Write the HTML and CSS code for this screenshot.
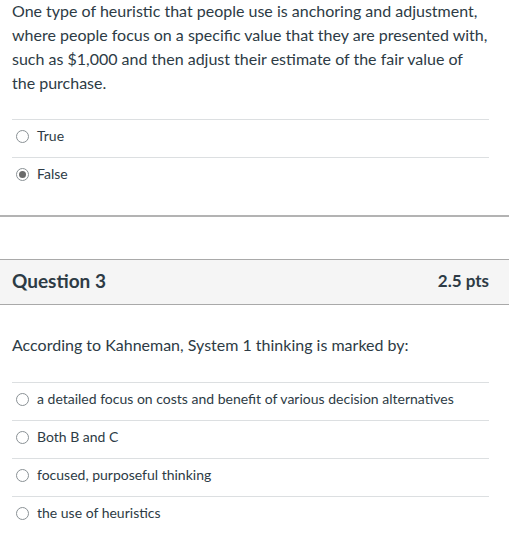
FILE: index.html
```html
<!DOCTYPE html>
<html>
<head>
<meta charset="utf-8">
<link rel="stylesheet" href="styles.css">
</head>
<body>
<div class="q-body">
  <div class="q-text">One type of heuristic that people use is anchoring and adjustment, where people focus on a specific value that they are presented with, such as $1,000 and then adjust their estimate of the fair value of the purchase.</div>
  <div class="answers first">
    <div class="answer"><span class="radio"></span><span>True</span></div>
    <div class="answer"><span class="radio checked"></span><span>False</span></div>
  </div>
</div>
<div class="divider"></div>
<div class="q-header">
  <span class="q-title">Question 3</span>
  <span class="q-pts">2.5 pts</span>
</div>
<div class="q-body">
  <div class="q-text second">According to Kahneman, System 1 thinking is marked by:</div>
  <div class="answers">
    <div class="answer"><span class="radio"></span><span>a detailed focus on costs and benefit of various decision alternatives</span></div>
    <div class="answer"><span class="radio"></span><span>Both B and C</span></div>
    <div class="answer"><span class="radio"></span><span>focused, purposeful thinking</span></div>
    <div class="answer"><span class="radio"></span><span>the use of heuristics</span></div>
  </div>
</div>
</body>
</html>
```
FILE: styles.css
```css
html, body {
  margin: 0;
  padding: 0;
  background: #fff;
}
body {
  font-family: Lato, "Noto Sans", sans-serif;
  color: #2d3b45;
  width: 509px;
  overflow: hidden;
}
.q-body {
  padding: 0 20px 0 12px;
}
.q-text {
  font-size: 16px;
  line-height: 24px;
  margin-top: -1px;
}
.q-text.second {
  margin-top: 0;
  padding-top: 28px;
}
.answers {
  margin-top: 25px;
}
.answers.first {
  margin-top: 24px;
}
.answer {
  display: flex;
  align-items: flex-start;
  height: 37px;
  box-sizing: content-box;
  border-top: 1px solid #dcdfe1;
  font-size: 14px;
  line-height: 20px;
  padding-left: 4px;
  gap: 8px;
}
.answer > span:last-child {
  padding-top: 6px;
}
.radio {
  width: 11px;
  height: 11px;
  margin-top: 10px;
  border: 1px solid #8a9195;
  border-radius: 50%;
  box-sizing: content-box;
  position: relative;
  flex: none;
}
.radio.checked::after {
  content: "";
  position: absolute;
  left: 2px;
  top: 2px;
  width: 7px;
  height: 7px;
  border-radius: 50%;
  background: #6b6b6b;
}
.divider {
  margin-top: 20px;
  border-top: 2px solid #b3b3b3;
}
.q-header {
  margin-top: 42px;
  height: 41px;
  padding: 0 20px 3px 12px;
  background: #f5f5f5;
  border-top: 1px solid #a9a9a9;
  border-bottom: 1px solid #a9a9a9;
  display: flex;
  align-items: center;
  justify-content: space-between;
  font-weight: bold;
  box-sizing: content-box;
}
.q-title {
  font-size: 19px;
}
.q-pts {
  font-size: 17px;
}
```
